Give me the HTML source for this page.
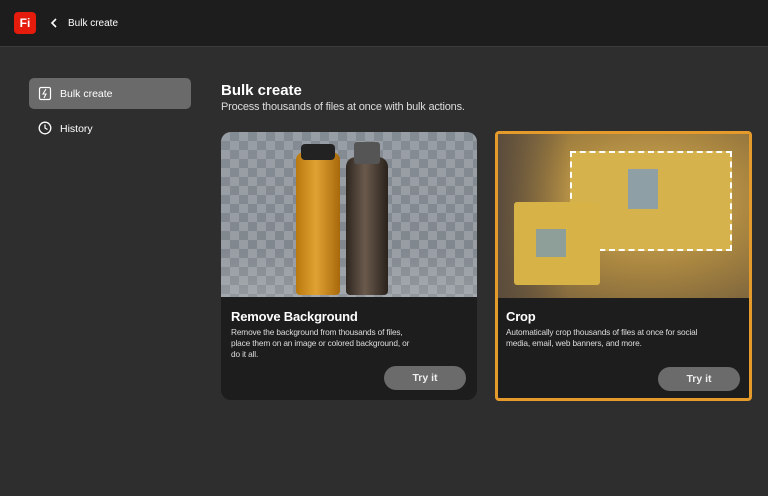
<!DOCTYPE html><html><head><style>
*{margin:0;padding:0;box-sizing:border-box}
body{width:768px;height:496px;background:#2e2e2e;font-family:"Liberation Sans",sans-serif;color:#fff;position:relative;overflow:hidden}
.hdr{position:absolute;left:0;top:0;width:768px;height:47px;background:#1d1d1d;border-bottom:1px solid #3c3c3c}
.logo{position:absolute;left:14px;top:12px;width:22px;height:22px;background:#e51b0c;border-radius:4px;font-weight:bold;font-size:12px;line-height:22px;text-align:center}
.abs{position:absolute}
.nav{left:29px;top:78px;width:162px;height:31px;background:#6a6a6a;border-radius:5px}
.card{position:absolute;background:#1d1d1d;border-radius:10px;overflow:hidden}
.btn{position:absolute;width:82px;height:24px;border-radius:12px;background:#6b6b6b;font-size:10.5px;font-weight:bold;text-align:center;line-height:24px;color:#eee}
.t{font-size:13px;font-weight:bold;letter-spacing:-0.2px}
.d{font-size:8.3px;line-height:11px;color:#ddd;letter-spacing:-0.15px}
</style></head><body>
<div class="hdr"><div class="logo">Fi</div>
<svg class="abs" style="left:50px;top:18px" width="8" height="10"><path d="M6 1L2 5L6 9" stroke="#fff" stroke-width="1.6" fill="none"/></svg>
<div class="abs" style="left:68px;top:18px;font-size:10px">Bulk create</div></div>
<div class="abs nav"></div>
<svg class="abs" style="left:38px;top:86px" width="14" height="15"><rect x="1.5" y="1.5" width="11" height="12" rx="1.5" stroke="#fff" fill="none" stroke-width="1.2"/><path d="M8 3L5 8H8L6 12" stroke="#fff" fill="none" stroke-width="1.1"/></svg>
<div class="abs" style="left:60px;top:88px;font-size:10.5px">Bulk create</div>
<svg class="abs" style="left:38px;top:121px" width="14" height="14"><circle cx="7" cy="7" r="5.8" stroke="#fff" fill="none" stroke-width="1.3"/><path d="M7 3.5V7L9.5 8.5" stroke="#fff" fill="none" stroke-width="1.2"/></svg>
<div class="abs" style="left:60px;top:123px;font-size:10.5px">History</div>
<div class="abs" style="left:221px;top:82px;font-size:15px;font-weight:bold">Bulk create</div>
<div class="abs" style="left:221px;top:101px;font-size:11px;color:#ddd;letter-spacing:-0.2px">Process thousands of files at once with bulk actions.</div>

<div class="card" style="left:221px;top:132px;width:256px;height:268px">
<div style="height:165px;background:repeating-conic-gradient(#8a9096 0 25%,#a6abb0 0 50%) 0 0/18px 18px;position:relative">
<div style="position:absolute;inset:0;background:linear-gradient(180deg,rgba(120,130,140,.3),rgba(90,100,110,.2) 70%,rgba(160,165,170,.4))"></div>
<div style="position:absolute;left:75px;top:20px;width:44px;height:143px;background:linear-gradient(90deg,#b9780d,#e0a233 45%,#a8690c);border-radius:8px 8px 4px 4px"></div>
<div style="position:absolute;left:80px;top:12px;width:34px;height:16px;background:#222;border-radius:4px"></div>
<div style="position:absolute;left:125px;top:25px;width:42px;height:138px;background:linear-gradient(90deg,#2e2620,#6a5a4c 45%,#2a221c);border-radius:10px 10px 4px 4px"></div>
<div style="position:absolute;left:133px;top:10px;width:26px;height:22px;background:#555;border-radius:3px"></div>
</div>
<div class="abs t" style="left:10px;top:177px">Remove Background</div>
<div class="abs d" style="left:10px;top:195px;width:185px">Remove the background from thousands of files, place them on an image or colored background, or do it all.</div>
<div class="btn" style="left:163px;top:234px">Try it</div>
</div>

<div class="card" style="left:495px;top:131px;width:257px;height:270px;border:3px solid #e59a2c;border-radius:4px">
<div style="height:164px;background:radial-gradient(ellipse at 60% 40%,#d9b25a,#a88540 50%,#6e5a3c);position:relative">
<div style="position:absolute;left:0;top:0;width:70px;height:164px;background:linear-gradient(90deg,#5b4c3c,rgba(0,0,0,0))"></div>
<div style="position:absolute;left:72px;top:17px;width:162px;height:100px;border:2px dashed #fff;background:#d5b24c"></div>
<div style="position:absolute;left:130px;top:35px;width:30px;height:40px;background:#8ea0a6"></div>
<div style="position:absolute;left:16px;top:68px;width:86px;height:83px;background:#d7b247;border-radius:3px"></div>
<div style="position:absolute;left:38px;top:95px;width:30px;height:28px;background:#8e9e98"></div>
</div>
<div class="abs t" style="left:8px;top:175px">Crop</div>
<div class="abs d" style="left:8px;top:193px;width:195px">Automatically crop thousands of files at once for social media, email, web banners, and more.</div>
<div class="btn" style="left:160px;top:233px">Try it</div>
</div>
</body></html>
